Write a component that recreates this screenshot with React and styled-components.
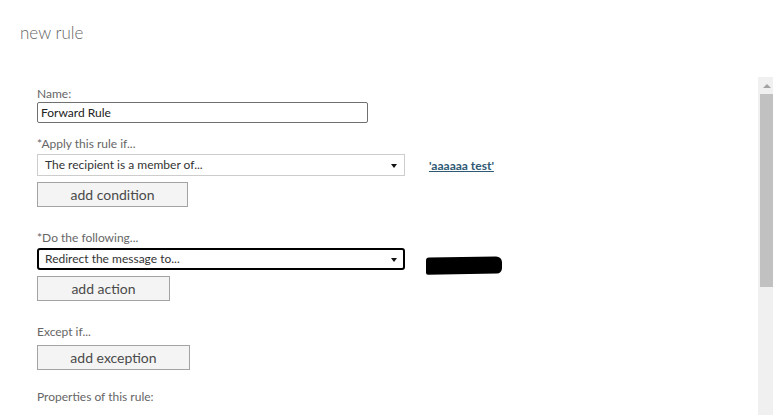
import React from "react";
import styled, { createGlobalStyle } from "styled-components";

const GlobalStyle = createGlobalStyle`
  html, body {
    margin: 0;
    padding: 0;
    background: #fff;
  }

  body {
    font-family: Lato, "Open Sans", sans-serif;
  }
`;

const Page = styled.div`
  width: 773px;
  height: 415px;
  overflow: hidden;
  display: flex;
  flex-direction: column;
`;

const Header = styled.header`
  height: 77px;
  flex-shrink: 0;
  padding: 0 20px;
  box-sizing: border-box;
`;

const Title = styled.h1`
  margin: 0;
  padding-top: 23px;
  font-size: 17px;
  line-height: 20px;
  font-weight: 300;
  color: #666;
`;

const Body = styled.div`
  flex: 1;
  min-height: 0;
  display: flex;
`;

const Form = styled.div`
  flex: 1;
  padding: 9px 0 0 37px;
  display: flex;
  flex-direction: column;
  align-items: flex-start;
`;

const Label = styled.label`
  display: block;
  margin-top: ${(p) => p.$top || 0}px;
  font-size: 12px;
  line-height: 16px;
  color: #666;
`;

const TextInput = styled.div`
  width: 331px;
  height: 21px;
  box-sizing: border-box;
  border: 1px solid #707070;
  border-radius: 2px;
  padding: 0 3px;
  display: flex;
  align-items: center;
  font-size: 12px;
  line-height: 16px;
  color: #222;
`;

const Row = styled.div`
  margin-top: ${(p) => p.$top || 0}px;
  height: 22px;
  display: flex;
  align-items: center;
  gap: ${(p) => p.$gap || 0}px;
`;

const Select = styled.div`
  width: 368px;
  height: 22px;
  box-sizing: border-box;
  border: ${(p) => (p.$focused ? "2px solid #000" : "1px solid #cdcdcd")};
  border-radius: ${(p) => (p.$focused ? "3px" : "0")};
  padding: 0 ${(p) => (p.$focused ? 6 : 7)}px;
  display: flex;
  align-items: center;
  justify-content: space-between;
  font-size: 12px;
  line-height: 16px;
  color: #333;
`;

const Caret = styled.span`
  width: 0;
  height: 0;
  border-left: 3.5px solid transparent;
  border-right: 3.5px solid transparent;
  border-top: 4px solid #111;
  margin-top: 1px;
`;

const ValueLink = styled.a`
  margin-top: 2px;
  font-size: 12px;
  line-height: 16px;
  font-weight: 700;
  color: #2f5873;
  text-decoration: underline;
  cursor: pointer;
`;

const Redaction = styled.span`
  width: 76px;
  height: 17px;
  background: #000;
  border-radius: 3px 6px 5px 2px;
  transform: translateY(6px) skewY(-1deg);
`;

const Button = styled.button`
  margin-top: ${(p) => p.$top || 0}px;
  width: ${(p) => p.$width}px;
  height: 25px;
  box-sizing: border-box;
  border: 1px solid #a3a3a3;
  background: #f4f4f4;
  padding: 0;
  font-family: inherit;
  font-size: 14px;
  line-height: 18px;
  color: #4a4a4a;
  cursor: pointer;
`;

const Scrollbar = styled.div`
  width: 15px;
  flex-shrink: 0;
  background: #f0f0f0;
  display: flex;
  flex-direction: column;
`;

const ScrollArrow = styled.div`
  height: 17px;
  display: flex;
  align-items: center;
  justify-content: center;
  padding-left: 2px;

  &::before {
    content: "";
    width: 0;
    height: 0;
    border-left: 4px solid transparent;
    border-right: 4px solid transparent;
    border-bottom: 4px solid #a3a3a3;
  }
`;

const Thumb = styled.div`
  height: 193px;
  margin-left: 2px;
  background: #c1c1c1;
`;

export default function App() {
  return (
    <>
      <GlobalStyle />
      <Page>
        <Header>
          <Title>new rule</Title>
        </Header>
        <Body>
          <Form>
            <Label>Name:</Label>
            <TextInput>Forward Rule</TextInput>

            <Label $top={13}>*Apply this rule if...</Label>
            <Row $top={2} $gap={24}>
              <Select>
                <span>The recipient is a member of...</span>
                <Caret />
              </Select>
              <ValueLink>'aaaaaa test'</ValueLink>
            </Row>
            <Button $top={6} $width={151}>
              add condition
            </Button>

            <Label $top={23}>*Do the following...</Label>
            <Row $top={2} $gap={21}>
              <Select $focused>
                <span>Redirect the message to...</span>
                <Caret />
              </Select>
              <Redaction />
            </Row>
            <Button $top={6} $width={133}>
              add action
            </Button>

            <Label $top={23}>Except if...</Label>
            <Button $top={5} $width={153}>
              add exception
            </Button>

            <Label $top={19}>Properties of this rule:</Label>
          </Form>
          <Scrollbar>
            <ScrollArrow />
            <Thumb />
          </Scrollbar>
        </Body>
      </Page>
    </>
  );
}
